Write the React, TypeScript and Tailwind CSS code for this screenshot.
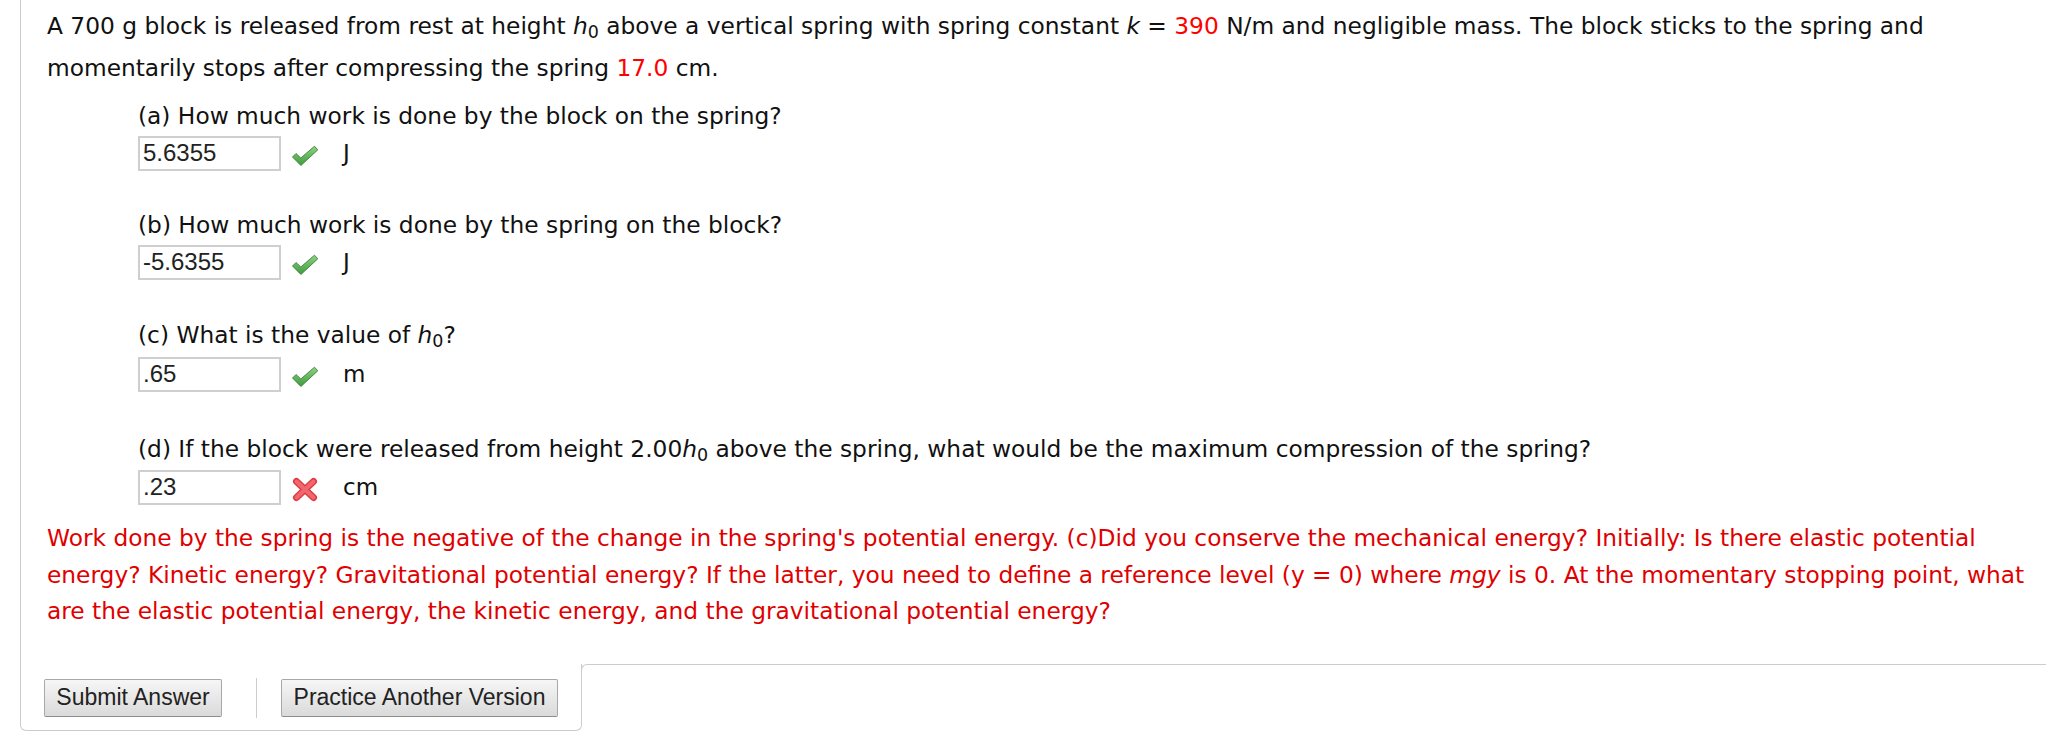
import React from "react";

const SANS = "font-['DejaVu_Sans',Verdana,sans-serif]";
const ARIAL = "font-['Liberation_Sans',Arial,Helvetica,sans-serif]";

function H0() {
  return (
    <>
      <i>h</i>
      <sub className="not-italic">0</sub>
    </>
  );
}

function Check() {
  return (
    <svg width="28" height="22" viewBox="0 0 28 22" className="mt-[5px]">
      <defs>
        <linearGradient id="chk" x1="0" y1="0" x2="0" y2="1">
          <stop offset="0" stopColor="#8fd47f" />
          <stop offset="1" stopColor="#3d9a3d" />
        </linearGradient>
      </defs>
      <path
        d="M1.5 12 L5 8.5 L9.8 13 L23.5 1.2 L26.8 4.8 L9.9 20.5 Z"
        fill="url(#chk)"
        stroke="#3b803b"
        strokeWidth="0.9"
        strokeLinejoin="round"
      />
    </svg>
  );
}

function Cross() {
  return (
    <svg width="26" height="25" viewBox="0 0 26 25" className="mt-[4px]">
      <path d="M4.5 4.5 L21.5 20.5 M21.5 4.5 L4.5 20.5" stroke="#dc3c45" strokeWidth="7" strokeLinecap="round" />
      <path d="M4.5 4.5 L21.5 20.5 M21.5 4.5 L4.5 20.5" stroke="#f2676d" strokeWidth="4" strokeLinecap="round" />
    </svg>
  );
}

function Answer({ value, ok, unit }: { value: string; ok: boolean; unit: string }) {
  return (
    <div className="mt-px flex items-center">
      <input
        readOnly
        value={value}
        className={`h-[35px] w-[143px] border-2 border-[#cfcfcf] bg-white px-[3px] text-[24px] text-[#222] outline-none ${ARIAL}`}
      />
      <span className="ml-[10px] flex w-[28px] justify-center">{ok ? <Check /> : <Cross />}</span>
      <span className="ml-[24px] text-[23px] text-[#111]">{unit}</span>
    </div>
  );
}

export default function App() {
  return (
    <div className={`min-h-screen bg-white text-[23.3px] text-[#111] ${SANS}`}>
      <div className="ml-[20px] border-l border-[#cccccc] pb-[34px] pl-[26px] pt-[8px]">
        <p className="whitespace-nowrap leading-[36px]">
          <span className="block pb-[6px]">
            A 700 g block is released from rest at height <H0 /> above a vertical spring with spring constant{" "}
            <i>k</i> = <span className="text-[#ff0000]">390</span> N/m and negligible mass. The block sticks to the
            spring and
          </span>
          <span className="block">
            momentarily stops after compressing the spring <span className="text-[#ff0000]">17.0</span> cm.
          </span>
        </p>

        <div className="ml-[91px] mt-[12px] whitespace-nowrap leading-[36px]">
          <div>(a) How much work is done by the block on the spring?</div>
          <Answer value="5.6355" ok unit="J" />

          <div className="mt-[36px]">(b) How much work is done by the spring on the block?</div>
          <Answer value="-5.6355" ok unit="J" />

          <div className="mt-[37px] pb-[2px]">
            (c) What is the value of <H0 />?
          </div>
          <Answer value=".65" ok unit="m" />

          <div className="mt-[39px] pb-px">
            (d) If the block were released from height 2.00
            <H0 /> above the spring, what would be the maximum compression of the spring?
          </div>
          <Answer value=".23" ok={false} unit="cm" />
        </div>

        <p className="mt-[15px] whitespace-nowrap leading-[36.5px] text-[#e00000]">
          Work done by the spring is the negative of the change in the spring's potential energy. (c)Did you conserve
          the mechanical energy? Initially: Is there elastic potential
          <br />
          energy? Kinetic energy? Gravitational potential energy? If the latter, you need to define a reference level
          (y = 0) where <i>mgy</i> is 0. At the momentary stopping point, what
          <br />
          are the elastic potential energy, the kinetic energy, and the gravitational potential energy?
        </p>
      </div>

      <div className="ml-[20px] flex items-start">
        <div className="flex items-center rounded-b-[6px] border-x border-b border-[#cccccc] pb-[12px] pl-[23px] pr-[23px] pt-[14px]">
          <button
            className={`h-[38px] w-[178px] rounded-[2px] border border-[#a8a8a8] border-b-[#8c8c8c] bg-linear-to-b from-[#f6f6f6] to-[#dadada] text-[23px] text-[#222] ${ARIAL}`}
          >
            Submit Answer
          </button>
          <span className="ml-[34px] h-[40px] w-px bg-[#cccccc]" />
          <button
            className={`ml-[24px] h-[38px] w-[277px] rounded-[2px] border border-[#a8a8a8] border-b-[#8c8c8c] bg-linear-to-b from-[#f6f6f6] to-[#dadada] text-[23px] text-[#222] ${ARIAL}`}
          >
            Practice Another Version
          </button>
        </div>
        <div className="-ml-px h-[20px] flex-1 rounded-tl-[6px] border-l border-t border-[#cccccc]" />
      </div>
    </div>
  );
}
